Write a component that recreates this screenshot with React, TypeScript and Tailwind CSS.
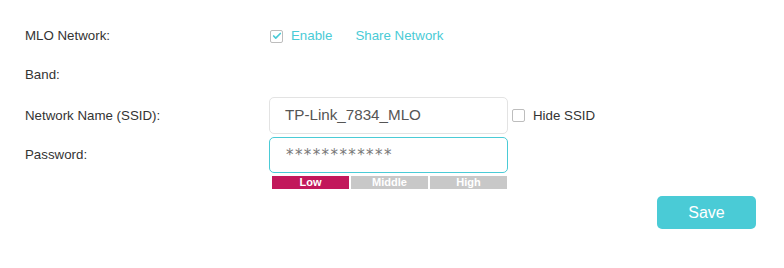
import { Check } from 'lucide-react';

const font = { fontFamily: '"Liberation Sans", Arial, sans-serif' };

function Box({ checked }: { checked?: boolean }): JSX.Element {
  return (
    <span className="w-[13px] h-[13px] rounded-[2px] border border-[#bdbdbd] bg-white flex items-center justify-center shrink-0">
      {checked ? <Check className="w-[10px] h-[10px] text-[#4acbd6]" strokeWidth={4} /> : null}
    </span>
  );
}

function Label({ children }: { children: React.ReactNode }): JSX.Element {
  return <div className="w-[244px] shrink-0 text-[13.3px] text-[#333]">{children}</div>;
}

export default function App(): JSX.Element {
  return (
    <div className="w-[784px] h-[268px] bg-white pl-[25px] flex flex-col" style={font}>
      <div className="mt-[24px] h-[24px] flex items-center">
        <Label>MLO Network:</Label>
        <div className="flex items-center ml-[1px]">
          <Box checked />
          <span className="ml-[8px] text-[13.3px] text-[#4acbd6]">Enable</span>
          <span className="ml-[23px] text-[13.3px] text-[#4acbd6]">Share Network</span>
        </div>
      </div>

      <div className="mt-[15px] h-[24px] flex items-center">
        <Label>Band:</Label>
      </div>

      <div className="mt-[10px] h-[37px] flex items-center">
        <Label>Network Name (SSID):</Label>
        <div className="w-[239px] h-[37px] rounded-[5px] border border-[#e3e3e3] flex items-center pl-[15px] text-[15.2px] text-[#555]">
          TP-Link_7834_MLO
        </div>
        <div className="ml-[4px] flex items-center">
          <Box />
          <span className="ml-[8px] text-[13.3px] text-[#333]">Hide SSID</span>
        </div>
      </div>

      <div className="mt-[3px] h-[36px] flex items-center">
        <Label>Password:</Label>
        <div
          className="w-[239px] h-[36px] rounded-[5px] border border-[#4acbd6] flex items-center pl-[16px] text-[15px] text-[#777] tracking-[1.4px]"
          style={{ fontFamily: '"DejaVu Sans", sans-serif' }}
        >
          ************
        </div>
      </div>

      <div className="mt-[3px] ml-[247px] flex gap-[2px] h-[13px] text-[11px] font-bold text-white leading-[13px]">
        <div className="w-[77px] bg-[#c2185b] text-center">Low</div>
        <div className="w-[77px] bg-[#c8c8c8] text-center">Middle</div>
        <div className="w-[77px] bg-[#c8c8c8] text-center">High</div>
      </div>

      <div className="mt-[7px] flex justify-end pr-[28px]">
        <button className="w-[99px] h-[33px] rounded-[5px] bg-[#4acbd6] text-white text-[16px]">
          Save
        </button>
      </div>
    </div>
  );
}
